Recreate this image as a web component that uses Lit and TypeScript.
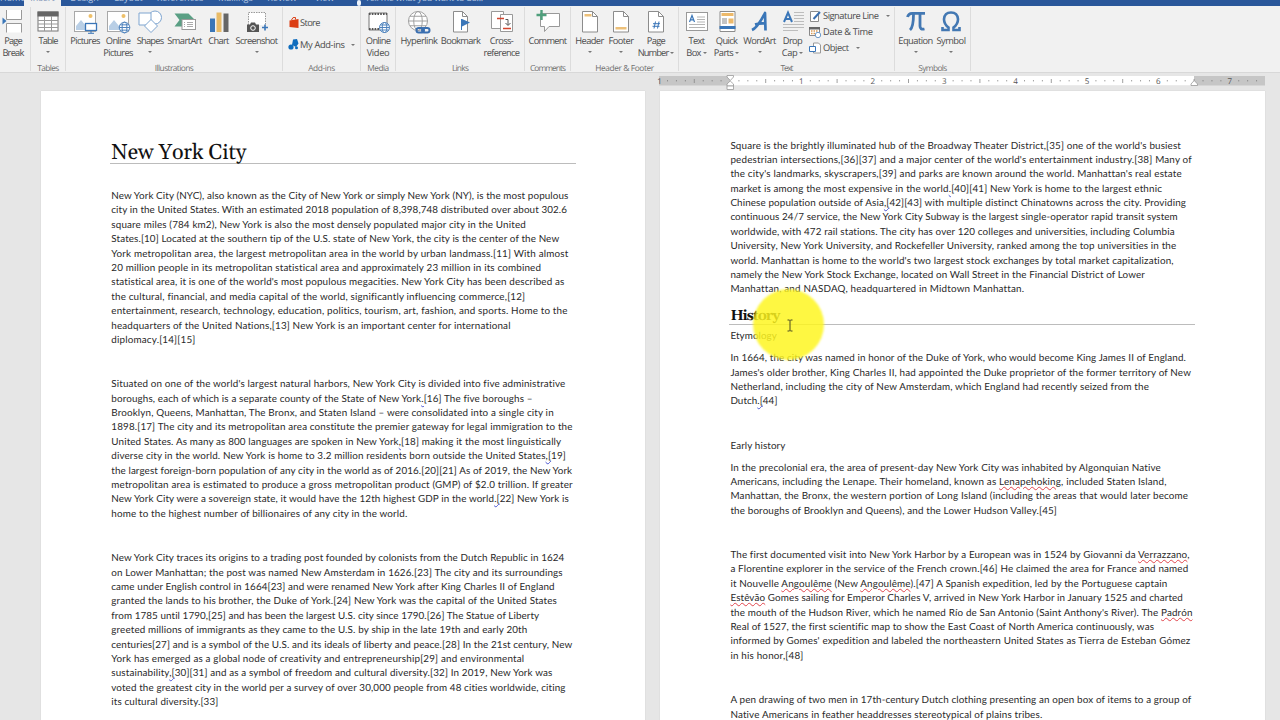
import { LitElement, html, svg, css, nothing } from "lit";
import { customElement } from "lit/decorators.js";

type Line = [string, number];

const INTRO: Line[] = [
  ["New York City (NYC), also known as the City of New York or simply New York (NY), is the most populous", 457],
  ["city in the United States. With an estimated 2018 population of 8,398,748 distributed over about 302.6", 456],
  ["square miles (784 km2), New York is also the most densely populated major city in the United", 414.5],
  ["States.[10] Located at the southern tip of the U.S. state of New York, the city is the center of the New", 448],
  ["York metropolitan area, the largest metropolitan area in the world by urban landmass.[11] With almost", 457],
  ["20 million people in its metropolitan statistical area and approximately 23 million in its combined", 430],
  ["statistical area, it is one of the world's most populous megacities. New York City has been described as", 453.5],
  ["the cultural, financial, and media capital of the world, significantly influencing commerce{b:,[}12]", 413.5],
  ["entertainment, research, technology, education, politics, tourism, art, fashion, and sports. Home to the", 456.5],
  ["headquarters of the United Nations{b:,[}13] New York is an important center for international", 399.5],
  ["diplomacy.[14][15]", 84],
];
const BOROUGHS: Line[] = [
  ["Situated on one of the world's largest natural harbors, New York City is divided into five administrative", 454],
  ["boroughs, each of which is a separate county of the State of New York{b:.[}16] The five boroughs –", 421],
  ["Brooklyn, Queens, Manhattan, The Bronx, and Staten Island – were consolidated into a single city in", 442],
  ["1898.[17] The city and its metropolitan area constitute the premier gateway for legal immigration to the", 461.5],
  ["United States. As many as 800 languages are spoken in New York{b:,[}18] making it the most linguistically", 450],
  ["diverse city in the world. New York is home to 3.2 million residents born outside the United States{b:,[}19]", 454.5],
  ["the largest foreign-born population of any city in the world as of 2016.[20][21] As of 2019, the New York", 461],
  ["metropolitan area is estimated to produce a gross metropolitan product (GMP) of $2.0 trillion. If greater", 461.5],
  ["New York City were a sovereign state, it would have the 12th highest GDP in the world{b:.[}22] New York is", 457.5],
  ["home to the highest number of billionaires of any city in the world.", 296],
];
const ORIGINS: Line[] = [
  ["New York City traces its origins to a trading post founded by colonists from the Dutch Republic in 1624", 453],
  ["on Lower Manhattan; the post was named New Amsterdam in 1626.[23] The city and its surroundings", 451],
  ["came under English control in 1664[23] and were renamed New York after King Charles II of England", 443],
  ["granted the lands to his brother, the Duke of York.[24] New York was the capital of the United States", 445.5],
  ["from 1785 until 1790{b:,[}25] and has been the largest U.S. city since 1790.[26] The Statue of Liberty", 428],
  ["greeted millions of immigrants as they came to the U.S. by ship in the late 19th and early 20th", 416],
  ["centuries[27] and is a symbol of the U.S. and its ideals of liberty and peace.[28] In the 21st century, New", 461],
  ["York has emerged as a global node of creativity and entrepreneurship[29] and environmental", 413],
  ["sustainability{b:,[}30][31] and as a symbol of freedom and cultural diversity.[32] In 2019, New York was", 441],
  ["voted the greatest city in the world per a survey of over 30,000 people from 48 cities worldwide, citing", 454.5],
  ["its cultural diversity.[33]", 107],
];
const SQUARE: Line[] = [
  ["Square is the brightly illuminated hub of the Broadway Theater District,[35] one of the world's busiest", 450.5],
  ["pedestrian intersections,[36][37] and a major center of the world's entertainment industry.[38] Many of", 461.5],
  ["the city's landmarks, skyscrapers,[39] and parks are known around the world. Manhattan's real estate", 451],
  ["market is among the most expensive in the world{b:.[}40][41] New York is home to the largest ethnic", 431.5],
  ["Chinese population outside of Asia{b:,[}42][43] with multiple distinct Chinatowns across the city. Providing", 456],
  ["continuous 24/7 service, the New York City Subway is the largest single-operator rapid transit system", 447.5],
  ["worldwide, with 472 rail stations. The city has over 120 colleges and universities, including Columbia", 444.5],
  ["University, New York University, and Rockefeller University, ranked among the top universities in the", 446],
  ["world. Manhattan is home to the world's two largest stock exchanges by total market capitalization,", 443],
  ["namely the New York Stock Exchange, located on Wall Street in the Financial District of Lower", 414.5],
  ["Manhattan, and NASDAQ, headquartered in Midtown Manhattan.", 293],
];
const NAMED: Line[] = [
  ["In 1664, the city was named in honor of the Duke of York, who would become King James II of England.", 455.5],
  ["James's older brother, King Charles II, had appointed the Duke proprietor of the former territory of New", 460.5],
  ["Netherland, including the city of New Amsterdam, which England had recently seized from the", 418.5],
  ["Dutch{b:.[}44]", 47],
];
const PRECOLONIAL: Line[] = [
  ["In the precolonial era, the area of present-day New York City was inhabited by Algonquian Native", 430.5],
  ["Americans, including the Lenape. Their homeland, known as {r:Lenapehoking}, included Staten Island,", 436],
  ["Manhattan, the Bronx, the western portion of Long Island (including the areas that would later become", 457.5],
  ["the boroughs of Brooklyn and Queens), and the Lower Hudson Valley.[45]", 326.5],
];
const VISIT: Line[] = [
  ["The first documented visit into New York Harbor by a European was in 1524 by Giovanni da {r:Verrazzano},", 459],
  ["a Florentine explorer in the service of the French crown.[46] He claimed the area for France and named", 458],
  ["it Nouvelle {r:Angoulême} (New {r:Angoulême}).[47] A Spanish expedition, led by the Portuguese captain", 437],
  ["{r:Estêvão} Gomes sailing for Emperor Charles V, arrived in New York Harbor in January 1525 and charted", 452.5],
  ["the mouth of the Hudson River, which he named Río de San Antonio (Saint Anthony's River). The {r:Padrón}", 462],
  ["Real of 1527, the first scientific map to show the East Coast of North America continuously, was", 423.5],
  ["informed by Gomes' expedition and labeled the northeastern United States as Tierra de Esteban Gómez", 460],
  ["in his honor{b:,[}48]", 73],
];
const DRAWING: Line[] = [
  ["A pen drawing of two men in 17th-century Dutch clothing presenting an open box of items to a group of", 461],
  ["Native Americans in feather headdresses stereotypical of plains tribes.", 312],
];

const pagePic = (x: number, w: number) => svg`<path d="M${x} 1.5h${w - 5}l5 5v15.5h-${w}z" fill="#fff" stroke="#8c8c8c"/><path d="M${x + w - 5} 1.5v5h5" fill="none" stroke="#8c8c8c"/>`;
const globe = (cx: number, cy: number, r: number, c: string) => svg`
  <g fill="#fff" stroke=${c} stroke-width="1"><circle cx=${cx} cy=${cy} r=${r}/>
  <ellipse cx=${cx} cy=${cy} rx=${r * 0.45} ry=${r} fill="none"/>
  <path fill="none" d="M${cx - r} ${cy}h${2 * r}M${cx - r * 0.85} ${cy - r * 0.5}h${r * 1.7}M${cx - r * 0.85} ${cy + r * 0.5}h${r * 1.7}"/></g>`;
const photo = svg`<rect x="1.5" y="1.5" width="21" height="20" fill="#fff" stroke="#a8a8a8"/>
  <path d="M3 20v-4l5-6 5 6 2-2 4 6z" fill="#b9cfe6"/><circle cx="17.5" cy="6" r="2" fill="#eec069"/>`;

const ICONS: Record<string, unknown> = {
  pageBreak: svg`<g fill="#fff" stroke="#999"><path d="M5.500 0v9.500h15V0M5.500 22.500v-9h15v9"/></g><path d="M1.500 7.500l4 3.500-4 3.500z" fill="#3a76b8"/>`,
  table: svg`<rect x="2" y="2" width="20" height="19" fill="#fff" stroke="#777"/><path d="M1.500 1.500h21v5h-21z" fill="#666"/><path d="M2 10.500h20M2 14h20M2 17.500h20M8.500 6v15M15.500 6v15" stroke="#999" fill="none"/>`,
  pictures: svg`${photo}<rect x="12.500" y="13.500" width="11" height="7" fill="#fff" stroke="#3a76b8" stroke-width="1.300"/><path d="M18 21v2M15 23.300h6" stroke="#3a76b8"/>`,
  online: svg`${photo}${globe(18.5, 17.5, 5.3, "#4f83bd")}`,
  shapes: svg`<g fill="#fff" stroke="#7ea5d0"><circle cx="17" cy="7.500" r="6.500"/><path d="M1 3h12v12H1z"/><path d="M13 9.500l6.500 6.500-6.500 6.500L6.500 16z"/></g>`,
  smartart: svg`<path d="M1.500 3.500h14l5.500 5.500-6 7.500h-13.500l5-6.500z" fill="#5a9f84"/><rect x="9" y="9.500" width="13.500" height="10" fill="#fff" stroke="#999"/><path d="M14 12.500h6M14 14.500h6M14 16.500h6M11 12.500h1M11 14.500h1M11 16.500h1" stroke="#aaa"/>`,
  chart: svg`<path d="M3 8.500h5V22H3z" fill="#3a76b8"/><path d="M9.500 2.500h5V22h-5z" fill="#e8bb68"/><path d="M16.500 3.500h5V22h-5z" fill="#666"/>`,
  screenshot: svg`<path d="M3.500 15V2.500h17V15" fill="#fff" stroke="#999" stroke-dasharray="1.500 1"/><path d="M2 14.500h3l1-2h4l1 2h3V22H2z" fill="#555"/><circle cx="8" cy="18" r="2.300" fill="none" stroke="#fff"/><path d="M20 14.500v6M17 17.500h6" stroke="#3a76b8" stroke-width="1.600"/>`,
  video: svg`<path d="M3 3h18v17H3z" fill="#fff" stroke="#777"/><path d="M3 4h18M3 19h12" stroke="#555" stroke-width="2" stroke-dasharray="1.600 1.200"/>${globe(18.5, 17.5, 5, "#4f83bd")}`,
  hyperlink: svg`${globe(11, 11, 9.5, "#a0a0a0")}<g fill="none" stroke="#3a6fb0" stroke-width="2"><rect x="9.500" y="18" width="7.500" height="4.500" rx="2.200"/><rect x="15" y="18" width="7.500" height="4.500" rx="2.200"/></g>`,
  bookmark: svg`${pagePic(4.5, 14)}<path d="M12.500 9v11" stroke="#3a76b8"/><path d="M13 9l8 3.500-8 4z" fill="#3a76b8"/>`,
  crossref: svg`<g fill="#fff" stroke="#999"><path d="M1.500 1.500h12v17h-12z"/><path d="M10.500 4.500h12v17h-12z"/></g><path d="M7 8.500h7M13 18.500h8" stroke="#d2452f" stroke-width="1.500"/><path d="M15.500 9.500h2.500V15M15.500 13l2.500 2.500 2.500-2.500" fill="none" stroke="#555"/>`,
  comment: svg`<path d="M4.500 3.500h19v13H13l-4.500 5v-5h-4z" fill="#fff" stroke="#999"/><path d="M5.500 0v10M.5 5h10" stroke="#4f9f7c" stroke-width="2.400"/>`,
  header: svg`${pagePic(4.5, 15)}<path d="M6.500 4h7v2.500h-7z" fill="#edc079"/>`,
  footer: svg`${pagePic(4.5, 15)}<path d="M6.500 17h11v2.500h-11z" fill="#edc079"/>`,
  pageNumber: svg`${pagePic(4.5, 15)}<path d="M11.500 11.500l-1.500 7M15 11.500l-1.500 7M9 13.700h7M8.500 16.300h7" stroke="#3a76b8"/>`,
  textBox: svg`<rect x="1.500" y="2.500" width="21" height="18" fill="#fff" stroke="#999"/><path d="M4.500 12L7 5.500 9.500 12M5.500 9.800h3" fill="none" stroke="#3a76b8" stroke-width="1.200"/><path d="M12 7h8M12 9.500h8M12 12h8M4 14.500h16M4 17.500h16" stroke="#b5b5b5"/>`,
  quickParts: svg`<path d="M5 1.500h15v20H5z" fill="#fff" stroke="#8c8c8c"/><path d="M6.500 3h12v3h-12z" fill="#edb96a"/><path d="M13.500 8.500h5v5h-5z" fill="#edb96a"/><path d="M7 9h5M7 11h5M7 13h5" stroke="#888"/><path d="M4.500 16h16v3h-16z" fill="#3a76b8"/>`,
  wordArt: svg`<path d="M4 20Q9.500 17.500 17 3l.5 17.500M7 14.500q5-1.500 10.500-1" fill="none" stroke="#3a76b8" stroke-width="2.700" stroke-linejoin="round"/>`,
  dropCap: svg`<path d="M3 12L7 2.500 11 12M4.300 9h5.500" fill="none" stroke="#3a76b8" stroke-width="2"/><path d="M13 2.500h10M13 5.500h10M13 8.500h10M13 11.500h10M2 14.500h21M2 17.500h21M2 20.500h15" stroke="#bdbdbd"/>`,
  pi: svg`<path d="M3.500 7Q4.500 3.300 8 3.300h13" fill="none" stroke="#4378b3" stroke-width="2.800"/><path d="M9.500 4q0 13-3.500 16M16 4v12q0 4 4.500 3" fill="none" stroke="#4378b3" stroke-width="2.800"/>`,
  omega: svg`<path d="M3.500 17v3h6V17.500Q5 14 5 9.200 5.500 2.500 12 2.500t7 6.700Q19 14 14.500 17.500V20h6V17" fill="none" stroke="#4378b3" stroke-width="2.600"/>`,
  store: svg`<path d="M1.500 4.500l9-1.500v9l-9-1z" fill="#dc3e15"/><path d="M3.500 4Q4.500 .5 7.500 1.500v2" fill="none" stroke="#dc3e15"/>`,
  addins: svg`<path d="M5 1.500l4-.5 1.500 4.500-2.500 3.500-4-2z" fill="#0f6cbd"/><circle cx="3" cy="9" r="2.600" fill="#0f6cbd"/><circle cx="8.500" cy="9.800" r="1.500" fill="#0f6cbd"/>`,
  signature: svg`<path d="M1.500 1.500h8v10h-8z" fill="#fff" stroke="#8c8c8c"/><path d="M4.500 9l6.500-7" stroke="#3a6fb0" stroke-width="2"/>`,
  date: svg`<path d="M.5 1.500h10v8H.5z" fill="#fff" stroke="#888"/><path d="M0 1h11v2.500H0z" fill="#666"/><path d="M2 5h7M2 7.500h5" stroke="#d99a55" stroke-width="1.400" stroke-dasharray="1.500 1"/><circle cx="9" cy="9" r="2.700" fill="#fff" stroke="#6f9bca"/>`,
  object: svg`<path d="M4.500 1h5l2 2v8h-7z" fill="#fff" stroke="#999"/><path d="M.5 4.500h6v5h-6z" fill="#fff" stroke="#3a76b8"/>`,
};

interface Tool { icon: string; w: number; l: Line[]; drop?: boolean }
interface Row { icon: string; l: Line; gap?: number }
interface Group { w: number; pad: number; label?: Line; tools?: Tool[]; rows?: Row[]; tight?: boolean }

const GROUPS: Group[] = [
  { w: 31, pad: 0, tools: [{ icon: "pageBreak", w: 26, l: [["Page", 18.5], ["Break", 22]] }] },
  { w: 35, pad: 0, label: ["Tables", 22], tools: [{ icon: "table", w: 34, l: [["Table", 20]], drop: true }] },
  { w: 217, pad: 2, label: ["Illustrations", 39], tools: [
    { icon: "pictures", w: 34, l: [["Pictures", 30]] },
    { icon: "online", w: 32, l: [["Online", 25], ["Pictures", 30]] },
    { icon: "shapes", w: 32, l: [["Shapes", 27.5]], drop: true },
    { icon: "smartart", w: 37, l: [["SmartArt", 35]] },
    { icon: "chart", w: 31, l: [["Chart", 21]] },
    { icon: "screenshot", w: 45, l: [["Screenshot", 42.5]], drop: true }] },
  { w: 78, pad: 5, label: ["Add-ins", 27], rows: [{ icon: "store", l: ["Store", 20.5] }, { icon: "addins", l: ["My Add-ins", 45], gap: 6 }] },
  { w: 35, pad: 0, label: ["Media", 22], tools: [{ icon: "video", w: 34, l: [["Online", 25], ["Video", 23]] }] },
  { w: 129, pad: 2, label: ["Links", 17], tools: [
    { icon: "hyperlink", w: 42, l: [["Hyperlink", 37.5]] },
    { icon: "bookmark", w: 41, l: [["Bookmark", 40]] },
    { icon: "crossref", w: 41, l: [["Cross-", 24], ["reference", 36.5]] }] },
  { w: 46, pad: 0, label: ["Comments", 36], tools: [{ icon: "comment", w: 45, l: [["Comment", 38.5]] }] },
  { w: 108, pad: 3, label: ["Header & Footer", 59], tools: [
    { icon: "header", w: 31, l: [["Header", 29]], drop: true },
    { icon: "footer", w: 32, l: [["Footer", 25.5]], drop: true },
    { icon: "pageNumber", w: 38, l: [["Page", 19], ["Number", 31.5]], drop: true }] },
  { w: 216, pad: 2, label: ["Text", 13], tight: true, tools: [
    { icon: "textBox", w: 31, l: [["Text", 16.5], ["Box", 15]], drop: true },
    { icon: "quickParts", w: 29, l: [["Quick", 22], ["Parts", 20]], drop: true },
    { icon: "wordArt", w: 37, l: [["WordArt", 33]], drop: true },
    { icon: "dropCap", w: 29, l: [["Drop", 20], ["Cap", 16]], drop: true }],
    rows: [{ icon: "signature", l: ["Signature Line", 56], gap: 5 }, { icon: "date", l: ["Date & Time", 50] }, { icon: "object", l: ["Object", 26], gap: 5 }] },
  { w: 76, pad: 3, label: ["Symbols", 29], tools: [
    { icon: "pi", w: 35, l: [["Equation", 35]], drop: true },
    { icon: "omega", w: 36, l: [["Symbol", 29.5]], drop: true }] },
];

const TABS: [string, number, number][] = [["Home", 0, 24], ["Insert", 24, 61], ["Design", 61, 108], ["Layout", 108, 149], ["References", 149, 211], ["Mailings", 211, 260], ["Review", 260, 304], ["View", 304, 345]];

@customElement("app-root")
export class AppRoot extends LitElement {
  static styles = css`
    :host { display: flex; flex-direction: column; position: relative; width: 1280px; height: 720px; overflow: hidden; background: #e6e6e6; text-rendering: geometricPrecision; }
    .fit { display: inline-block; white-space: pre; }
    .tabs { display: flex; height: 6px; flex: none; overflow: hidden; background: #2a579a; font: 9px/12px "Open Sans", sans-serif; color: #b0c4e2; align-items: flex-end; }
    .tab { text-align: center; height: 12px; }
    .tab span { display: block; margin-top: -2px; }
    .tab.on { background: #f1f1f1; color: #7f93b5; }
    .tell { display: flex; align-items: flex-end; gap: 4px; padding-left: 12px; height: 12px; }
    .tell span { display: block; height: 14px; letter-spacing: -0.250px; }
    .bulb { width: 4px; height: 6px; border-radius: 3px; background: #eef3fa; }
    .ribbon { display: flex; flex: none; height: 67px; box-sizing: border-box; background: #f1f1f1; border-bottom: 1px solid #d8d8d8; color: #4a4a4a; font: 9.300px/11.700px "Open Sans", sans-serif; }
    .group { display: flex; flex-direction: column; flex: none; box-sizing: border-box; padding-top: 3px; height: 64px; margin-top: 1px; border-right: 1px solid #dcdcdc; }
    .body { display: flex; flex: none; height: 52px; }
    .tool { display: flex; flex-direction: column; align-items: center; flex: none; }
    .tool svg, .row svg { display: block; overflow: visible; flex: none; }
    .pic { width: 24px; height: 25px; }
    .lbl { display: flex; align-items: center; height: 11.700px; }
    .arrow { width: 0; border: 2px solid transparent; border-top: 2.500px solid #777; border-bottom: 0; }
    .lbl .arrow { margin-left: 2px; }
    .solo { margin-top: 4px; }
    .rows { display: flex; flex-direction: column; gap: 10px; padding-top: 6.500px; }
    .rows.tight { gap: 4px; padding: 0 0 0 2px; }
    .row { display: flex; align-items: center; height: 12px; }
    .tight .row { gap: 2px; }
    .caption { flex: none; text-align: center; font-size: 8.400px; line-height: 11px; padding-top: 0.600px; color: #727272; }
    .ruler { display: block; flex: none; margin: 2px 0 1px 650px; height: 15px; }
    .num { font: 8px "Open Sans", sans-serif; fill: #555; text-anchor: middle; }
    .pages { display: flex; gap: 15px; padding-left: 41px; flex: 1; min-height: 0; }
    .page { box-sizing: border-box; width: 604px; height: 640px; padding-left: 70.300px; background: #fff; flex: none; font: 9.850px/14.400px Lato, Carlito, sans-serif; color: #2a2a2a; box-shadow: 0 0 1px #c4c4c4; }
    .page + .page { width: 605px; padding-left: 70.400px; }
    .line { height: 14.400px; }
    .p { margin-bottom: 30px; }
    h1, h2, h3 { margin: 0; font-weight: 400; }
    h1 { font: 21.500px/26px Gelasio, "Liberation Serif", serif; color: #111; margin: 46px 0 25px -1px; padding: 4px 0 0 1px; width: 465px; height: 22px; border-bottom: 1px solid #bcbcbc; }
    h2 { font: bold 14.500px/20px Gelasio, "Liberation Serif", serif; color: #111; width: 465px; height: 18px; margin: -20.500px 0 3.500px -1px; padding-left: 1px; border-bottom: 1px solid #bcbcbc; }
    h3 { font: inherit; height: 14.400px; margin-bottom: 7.300px; }
    h2 + h3 { margin-bottom: 8.100px; }
    .first { padding-top: 47.500px; }
    .r { text-decoration: underline wavy #e0444c 0.700px; text-underline-offset: 0.500px; }
    .b { text-decoration: underline wavy #4a55d0 0.800px; text-underline-offset: 0.500px; }
    .spot { position: absolute; left: 753px; top: 289px; width: 71px; height: 71px; border-radius: 50%; background: rgba(254, 246, 30, 0.84); filter: blur(0.8px); }
    .beam { position: absolute; left: 786px; top: 319px; }
  `;

  firstUpdated() {
    const nodes = [...this.renderRoot.querySelectorAll<HTMLElement>(".fit")];
    const sizes = nodes.map((n) => n.getBoundingClientRect().width);
    nodes.forEach((n, i) => {
      const count = (n.textContent ?? "").length;
      n.style.letterSpacing = `${(Number(n.dataset.w) - sizes[i]) / Math.max(1, count - 1)}px`;
    });
  }

  private fit([t, w]: Line) {
    const parts = t.split(/(\{[rb]:[^}]*\})/).filter(Boolean);
    return html`<span class="fit" data-w=${w}>${parts.map((p) => (p[0] === "{" ? html`<span class=${p[1]}>${p.slice(3, -1)}</span>` : p))}</span>`;
  }

  private para(lines: Line[]) {
    return html`<div class="p">${lines.map((l) => html`<div class="line">${this.fit(l)}</div>`)}</div>`;
  }

  private tool(t: Tool) {
    const two = t.l.length > 1;
    return html`<div class="tool" style="width:${t.w}px">
      <svg class="pic" viewBox="0 0 24 25">${ICONS[t.icon]}</svg>
      ${t.l.map((l, i) => html`<div class="lbl">${this.fit(l)}${two && i === 1 && t.drop ? html`<i class="arrow"></i>` : nothing}</div>`)}
      ${!two && t.drop ? html`<i class="arrow solo"></i>` : nothing}
    </div>`;
  }

  private group(g: Group) {
    return html`<div class="group">
      <div class="body" style="width:${g.w - 1 - g.pad}px;padding-left:${g.pad}px">
        ${g.tools?.map((t) => this.tool(t)) ?? nothing}
        ${g.rows ? html`<div class="rows ${g.tight ? "tight" : ""}">${g.rows.map((r) => html`<div class="row">
          <svg width="12" height="13" viewBox="0 0 12 13">${ICONS[r.icon]}</svg>${this.fit(r.l)}
          ${r.gap ? html`<i class="arrow" style="margin-left:${r.gap}px"></i>` : nothing}</div>`)}</div>` : nothing}
      </div>
      ${g.label ? html`<div class="caption">${this.fit(g.label)}</div>` : nothing}
    </div>`;
  }

  private ruler() {
    const inch = 71.4, zero = 80;
    const marks = [];
    for (let i = -8; i <= 59; i++) {
      const x = zero + (i * inch) / 8;
      if (i === 0) continue;
      if (i % 8 === 0) marks.push(svg`<text class="num" x=${i < 0 ? x + 1 : x} y="8.500">${Math.abs(i / 8)}</text>`);
      else if (i % 4 === 0) marks.push(svg`<path d="M${x} 4v4" stroke="#888" stroke-width=".8"/>`);
      else marks.push(svg`<path d="M${x - 0.5} 5.800h1" stroke="#777"/>`);
    }
    return html`<svg class="ruler" width="630" height="15" viewBox="0 0 630 15">
      <path d="M9 1h606v9.500H9z" fill="#c6c6c6"/><path d="M80 1h464v9.500H80z" fill="#fff"/>${marks}
      <g fill="#fff" stroke="#999" stroke-width=".8"><path d="M77 .5h6.500v1.500l-3.200 3.500L77 2z"/><path d="M77 11V9l3.200-3 3.300 3v2z"/><path d="M77 11h6.500v3.500H77z"/><path d="M541 10.500V9l3.200-3.500 3.300 3.500v1.500z"/></g>
    </svg>`;
  }

  render() {
    return html`
      <div class="tabs">
        ${TABS.map(([t, a, b]) => html`<div class="tab ${t === "Insert" ? "on" : ""}" style="width:${b - a}px"><span>${t}</span></div>`)}
        <div class="tell"><i class="bulb"></i><span>Tell me what you want to do...</span></div>
      </div>
      <div class="ribbon">${GROUPS.map((g) => this.group(g))}</div>
      ${this.ruler()}
      <div class="pages">
        <div class="page">
          <h1>${this.fit(["New York City", 135])}</h1>
          ${this.para(INTRO)}${this.para(BOROUGHS)}${this.para(ORIGINS)}
        </div>
        <div class="page">
          <div class="first">${this.para(SQUARE)}</div>
          <h2>${this.fit(["History", 50])}</h2>
          <h3>${this.fit(["Etymology", 46.5])}</h3>
          ${this.para(NAMED)}
          <h3>${this.fit(["Early history", 55])}</h3>
          ${this.para(PRECOLONIAL)}${this.para(VISIT)}${this.para(DRAWING)}
        </div>
      </div>
      <div class="spot"></div>
      <svg class="beam" width="8" height="13" viewBox="0 0 8 13"><path d="M1.500 1h2l.5.5.5-.5h2M1.500 12h2l.5-.5.5.5h2M4 1.500v10" fill="none" stroke="#4a4820"/></svg>
    `;
  }
}
